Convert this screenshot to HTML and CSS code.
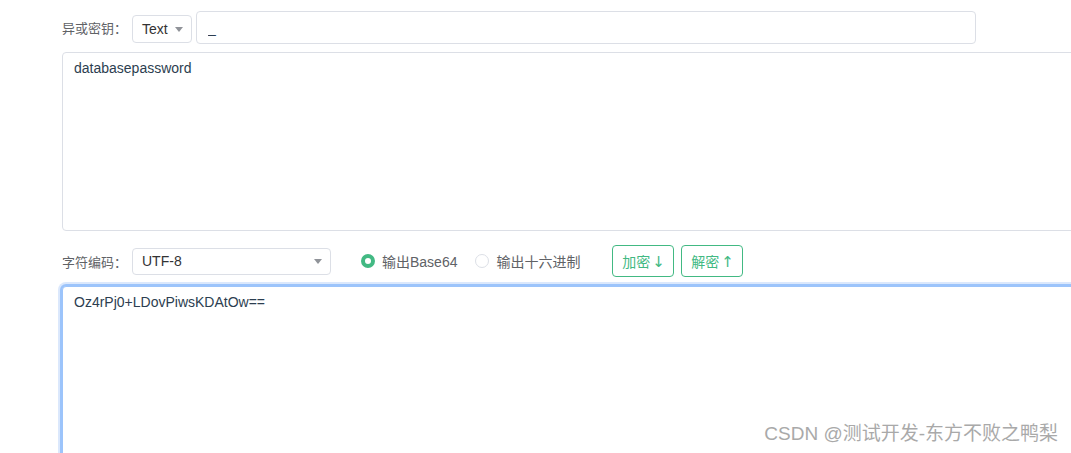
FILE: index.html
```html
<!DOCTYPE html>
<html>
    <head>
        <meta charset="UTF-8">
        <title>异或加密</title>
        <link rel="stylesheet" href="styles.css">
    </head>
    <body>
        <div id="page">
            <div class="row key-row">
                <span class="label">异或密钥：</span>
                <div class="fake-select key-type">
                    <span>Text</span>
                    <i class="caret"></i>
                </div>
                <input class="key-input" type="text" value="_">
            </div>

            <textarea class="box plain">databasepassword</textarea>

            <div class="row opt-row">
                <span class="label">字符编码：</span>
                <div class="fake-select charset">
                    <span>UTF-8</span>
                    <i class="caret"></i>
                </div>
                <div class="radios">
                    <label class="radio checked"><i class="dot"></i>输出Base64</label>
                    <label class="radio"><i class="dot"></i>输出十六进制</label>
                </div>
                <button class="btn">加密<span class="arrow">↓</span></button>
                <button class="btn">解密<span class="arrow">↑</span></button>
            </div>

            <textarea class="box result focused">Oz4rPj0+LDovPiwsKDAtOw==</textarea>
        </div>
        <div class="watermark">CSDN @测试开发-东方不败之鸭梨</div>
    </body>
</html>
```

FILE: styles.css
```css
body{
    margin: 0;
    background: white;
    overflow: hidden;
    font-family: "Liberation Sans", "Noto Sans CJK SC", sans-serif;
    color: #2c3e50;
}

#page{
    padding: 11px 0 0 62px;
    width: 1100px;
}

.row{
    display: flex;
    align-items: center;
}

.label{
    width: 70px;
    font-size: 13px;
    color: #606266;
}

.fake-select{
    box-sizing: border-box;
    display: flex;
    align-items: center;
    justify-content: space-between;
    border: 1px solid #dcdfe6;
    border-radius: 4px;
    padding: 0 8px 0 9px;
    font-size: 14px;
    color: #333;
    background: white;
}

.caret{
    width: 0;
    height: 0;
    border-left: 4px solid transparent;
    border-right: 4px solid transparent;
    border-top: 5px solid #909399;
}

.key-type{
    width: 60px;
    height: 28px;
    margin-top: 3px;
}

.key-input{
    box-sizing: border-box;
    margin-left: 4px;
    width: 780px;
    height: 33px;
    border: 1px solid #dcdfe6;
    border-radius: 4px;
    padding: 0 11px;
    font-family: inherit;
    font-size: 14px;
    color: #2c3e50;
    outline: none;
}

.box{
    display: block;
    box-sizing: border-box;
    width: 1040px;
    border: 1px solid #dcdfe6;
    border-radius: 4px;
    padding: 5px 11px;
    font-family: inherit;
    font-size: 14px;
    line-height: 1.5;
    color: #2c3e50;
    resize: none;
    outline: none;
}

.plain{
    margin-top: 8px;
    height: 179px;
}

.opt-row{
    margin-top: 14px;
    height: 32px;
}

.charset{
    width: 199px;
    height: 27px;
}

.radios{
    display: flex;
    align-items: center;
    margin-left: 30px;
    gap: 18px;
}

.radio{
    display: flex;
    align-items: center;
    font-size: 14px;
    color: #606266;
}

.dot{
    box-sizing: border-box;
    width: 14px;
    height: 14px;
    border-radius: 50%;
    border: 1px solid #dcdfe6;
    margin-right: 7px;
    background: white;
}

.radio.checked .dot{
    border: 4px solid #42b983;
}

.btn{
    box-sizing: border-box;
    width: 62px;
    height: 32px;
    margin-left: 7px;
    border: 1px solid #42b983;
    border-radius: 4px;
    background: white;
    color: #42b983;
    font-family: inherit;
    font-size: 14px;
    padding: 0;
}

.arrow{
    font-family: "DejaVu Sans", sans-serif;
    font-size: 15px;
    margin-left: 2px;
}

.radios + .btn{
    margin-left: 32px;
}

.result{
    margin-top: 9px;
    height: 200px;
    padding-top: 5px;
}

.focused{
    border-color: #9cc4fb;
    box-shadow: 0 0 0 2px #9cc4fb, 0 0 0 4px #dbe8fc;
}

.watermark{
    position: absolute;
    right: 13px;
    bottom: 8px;
    font-size: 19px;
    color: #a9a9a9;
    text-shadow: 0 0 1px white;
}
```
